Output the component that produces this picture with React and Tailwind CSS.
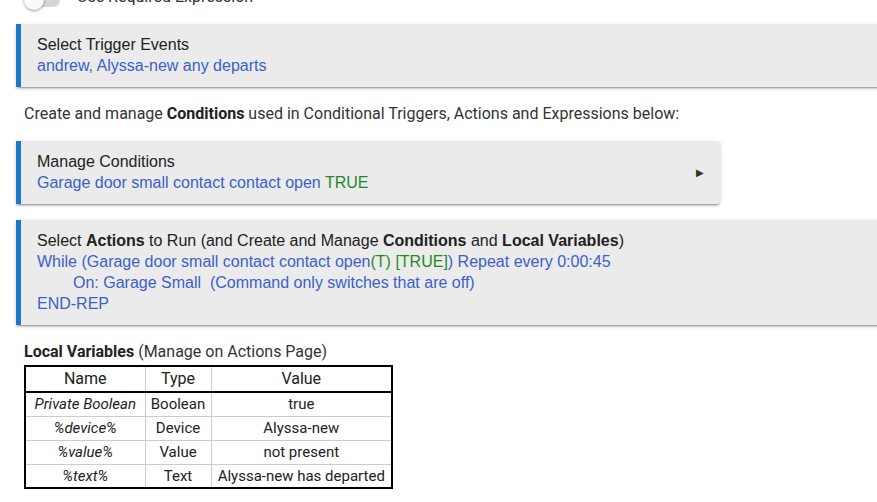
import React from 'react';

const blue = 'text-[#3a5fcd]';
const green = 'text-[#1f8b1f]';

function Panel({ className = '', children, arrow }) {
  return (
    <div
      className={`flex items-center bg-[#ebebeb] border-l-[5px] border-[#1a77c9] rounded-r-[3px] shadow-[0_2px_2px_rgba(0,0,0,0.14),0_3px_1px_-2px_rgba(0,0,0,0.2),0_1px_5px_rgba(0,0,0,0.12)] pl-4 pr-4 pt-[10px] pb-[11px] ${className}`}
    >
      <div className="flex-1 text-[16px] leading-[21px] text-[#222] font-['Liberation_Sans',Arial,sans-serif]">
        {children}
      </div>
      {arrow && <span className="text-[10px] text-[#333]">▶</span>}
    </div>
  );
}

const vars = [
  ['Private Boolean', 'Boolean', 'true'],
  ['%device%', 'Device', 'Alyssa-new'],
  ['%value%', 'Value', 'not present'],
  ['%text%', 'Text', 'Alyssa-new has departed'],
];

export default function App() {
  return (
    <div className="w-[877px] h-[502px] overflow-hidden bg-white font-['Roboto',sans-serif] text-[#333]">
      {/* toggle, mostly scrolled out of view */}
      <div className="h-6 pl-6 flex items-start">
        <div className="flex items-center gap-[17px] -mt-[10px]">
          <div className="relative w-9 h-5">
            <div className="absolute left-[6px] top-[3px] w-[30px] h-[14px] rounded-full bg-[#d6d6d6]" />
            <div className="absolute left-0 top-0 w-5 h-5 rounded-full bg-[#fafafa] shadow-[0_1px_3px_rgba(0,0,0,0.4)]" />
          </div>
          <span className="text-[16px] leading-5 -mt-[6px]">Use Required Expression</span>
        </div>
      </div>

      <Panel className="ml-4 -mr-3">
        <div>Select Trigger Events</div>
        <div className={blue}>andrew, Alyssa-new any departs</div>
      </Panel>

      <p className="ml-6 mt-[15px] mb-[15px] text-[16px] leading-6 text-[#333]">
        Create and manage <b className="font-bold text-[#222]">Conditions</b> used in Conditional Triggers, Actions and Expressions below:
      </p>

      <Panel className="ml-4 w-[704px]" arrow>
        <div>Manage Conditions</div>
        <div className={blue}>
          Garage door small contact contact open <span className={green}>TRUE</span>
        </div>
      </Panel>

      <Panel className="ml-4 -mr-3 mt-4">
        <div>
          Select <b>Actions</b> to Run (and Create and Manage <b>Conditions</b> and <b>Local Variables</b>)
        </div>
        <div className={blue}>
          While (Garage door small contact contact open<span className={green}>(T) [TRUE]</span>) Repeat every 0:00:45
        </div>
        <div className={`${blue} pl-9 whitespace-pre`}>On: Garage Small  (Command only switches that are off)</div>
        <div className={blue}>END-REP</div>
      </Panel>

      <div className="ml-6 mt-[17px] text-[16px] leading-5 text-[#333]">
        <b className="font-bold text-[#222]">Local Variables</b> (Manage on Actions Page)
      </div>

      <table className="ml-6 mt-[3px] border-collapse border-2 border-black text-[#222]">
        <thead>
          <tr className="border-b-2 border-black">
            <th className="w-[120px] h-[26px] font-normal text-[16px] border border-[#ccc] border-b-2 border-b-black">Name</th>
            <th className="w-[66px] font-normal text-[16px] border border-[#ccc] border-b-2 border-b-black">Type</th>
            <th className="w-[181px] font-normal text-[16px] border border-[#ccc] border-b-2 border-b-black">Value</th>
          </tr>
        </thead>
        <tbody>
          {vars.map(([name, type, value]) => (
            <tr key={name}>
              <td className="h-[24px] text-center italic text-[15px] border border-[#ccc] px-1">{name}</td>
              <td className="text-center text-[15px] border border-[#ccc] px-1">{type}</td>
              <td className="text-center text-[15px] border border-[#ccc] px-1">{value}</td>
            </tr>
          ))}
        </tbody>
      </table>
    </div>
  );
}
